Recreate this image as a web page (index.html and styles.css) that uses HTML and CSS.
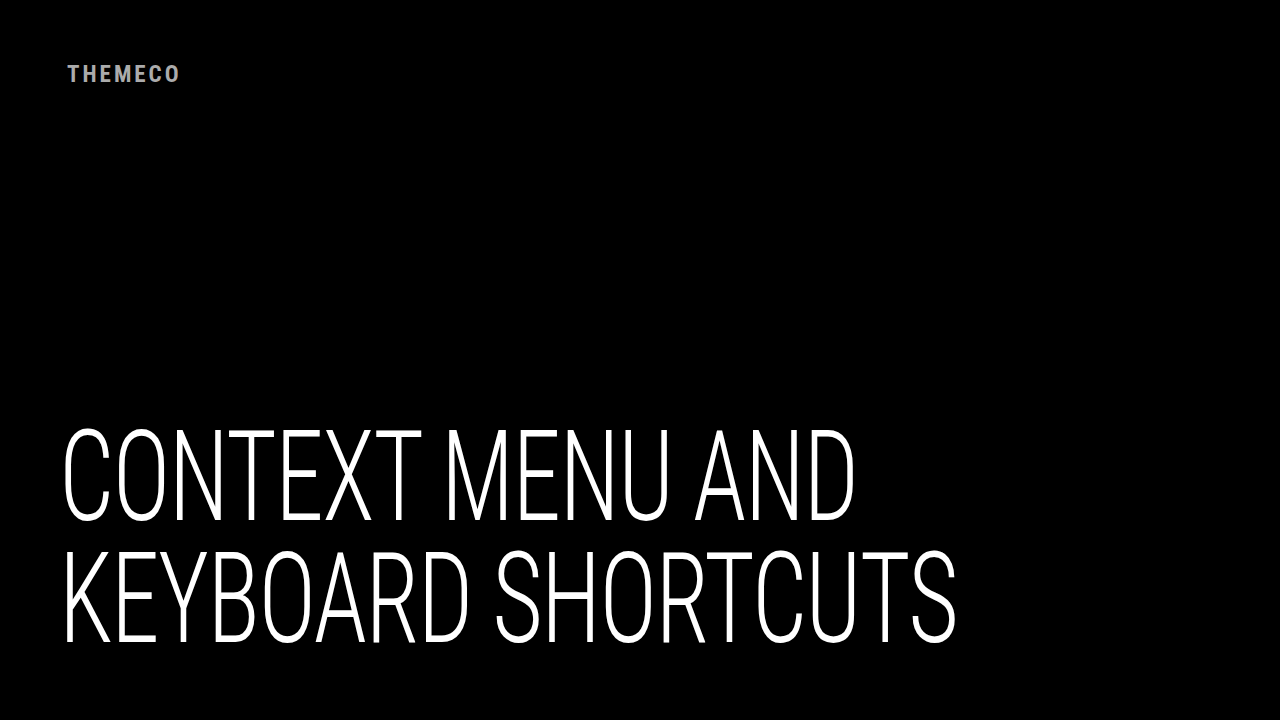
FILE: index.html
```html
<!DOCTYPE html>
<html lang="en">
<head>
  <meta charset="UTF-8" />
  <title>Themeco | Context Menu and Keyboard Shortcuts</title>
  <link rel="stylesheet" href="styles.css">
</head>
<body>
  <div class="slide">
    <div class="brand">THEMECO</div>
    <h1 class="title">
      <span class="line">CONTEXT MENU AND</span>
      <span class="line">KEYBOARD SHORTCUTS</span>
    </h1>
  </div>
</body>
</html>
```
FILE: styles.css
```css
* {
  margin: 0;
  padding: 0;
  box-sizing: border-box;
}

body {
  background: #000;
  color: #fff;
  font-family: Roboto, sans-serif;
  overflow: hidden;
}

.slide {
  height: 100vh;
  display: flex;
  flex-direction: column;
  padding: 62px 0 60px 67px;
}

.brand {
  font-size: 23px;
  line-height: 26px;
  font-weight: 700;
  font-stretch: condensed;
  letter-spacing: 3px;
  color: #ababab;
}

.title {
  margin-top: auto;
  margin-left: -8px;
  font-size: 126px;
  line-height: 122px;
  font-weight: 340;
  font-stretch: condensed;
  letter-spacing: -2px;
}

.line {
  display: block;
  white-space: nowrap;
  transform: scaleX(0.775);
  transform-origin: left center;
}
```
